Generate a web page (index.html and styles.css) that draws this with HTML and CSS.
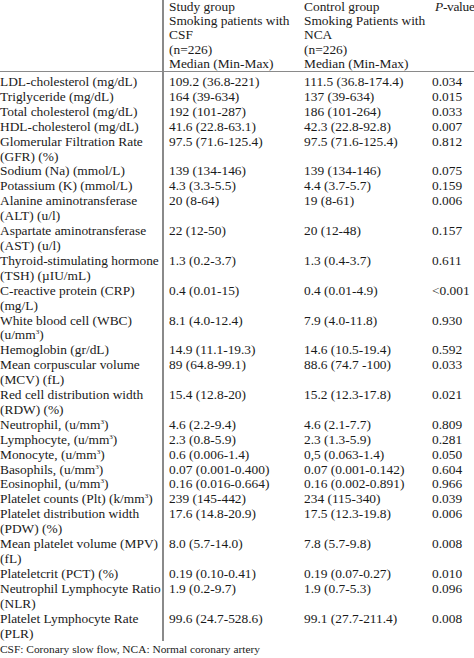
FILE: index.html
```html
<!DOCTYPE html>
<html>
<head>
<meta charset="utf-8">
<link rel="stylesheet" href="styles.css">
</head>
<body>
<table class="tbl">
<colgroup><col class="c1"><col class="c2"><col class="c3"><col class="c4"></colgroup>
<thead>
<tr class="head">
<th></th>
<th>Study group<br>Smoking patients with<br>CSF<br>(n=226)<br>Median (Min-Max)</th>
<th>Control group<br>Smoking Patients with<br>NCA<br>(n=226)<br>Median (Min-Max)</th>
<th><i>P</i>-value</th>
</tr>
</thead>
<tbody>
<tr class="first"><td>LDL-cholesterol (mg/dL)</td><td>109.2 (36.8-221)</td><td>111.5 (36.8-174.4)</td><td>0.034</td></tr>
<tr><td>Triglyceride (mg/dL)</td><td>164 (39-634)</td><td>137 (39-634)</td><td>0.015</td></tr>
<tr><td>Total cholesterol (mg/dL)</td><td>192 (101-287)</td><td>186 (101-264)</td><td>0.033</td></tr>
<tr><td>HDL-cholesterol (mg/dL)</td><td>41.6 (22.8-63.1)</td><td>42.3 (22.8-92.8)</td><td>0.007</td></tr>
<tr><td>Glomerular Filtration Rate<br>(GFR) (%)</td><td>97.5 (71.6-125.4)</td><td>97.5 (71.6-125.4)</td><td>0.812</td></tr>
<tr><td>Sodium (Na) (mmol/L)</td><td>139 (134-146)</td><td>139 (134-146)</td><td>0.075</td></tr>
<tr><td>Potassium (K) (mmol/L)</td><td>4.3 (3.3-5.5)</td><td>4.4 (3.7-5.7)</td><td>0.159</td></tr>
<tr><td>Alanine aminotransferase<br>(ALT) (u/l)</td><td>20 (8-64)</td><td>19 (8-61)</td><td>0.006</td></tr>
<tr><td>Aspartate aminotransferase<br>(AST) (u/l)</td><td>22 (12-50)</td><td>20 (12-48)</td><td>0.157</td></tr>
<tr><td>Thyroid-stimulating hormone<br>(TSH) (µIU/mL)</td><td>1.3 (0.2-3.7)</td><td>1.3 (0.4-3.7)</td><td>0.611</td></tr>
<tr><td>C-reactive protein (CRP)<br>(mg/L)</td><td>0.4 (0.01-15)</td><td>0.4 (0.01-4.9)</td><td>&lt;0.001</td></tr>
<tr><td>White blood cell (WBC)<br>(u/mm<sup>3</sup>)</td><td>8.1 (4.0-12.4)</td><td>7.9 (4.0-11.8)</td><td>0.930</td></tr>
<tr><td>Hemoglobin (gr/dL)</td><td>14.9 (11.1-19.3)</td><td>14.6 (10.5-19.4)</td><td>0.592</td></tr>
<tr><td>Mean corpuscular volume<br>(MCV) (fL)</td><td>89 (64.8-99.1)</td><td>88.6 (74.7 -100)</td><td>0.033</td></tr>
<tr><td>Red cell distribution width<br>(RDW) (%)</td><td>15.4 (12.8-20)</td><td>15.2 (12.3-17.8)</td><td>0.021</td></tr>
<tr><td>Neutrophil, (u/mm<sup>3</sup>)</td><td>4.6 (2.2-9.4)</td><td>4.6 (2.1-7.7)</td><td>0.809</td></tr>
<tr><td>Lymphocyte, (u/mm<sup>3</sup>)</td><td>2.3 (0.8-5.9)</td><td>2.3 (1.3-5.9)</td><td>0.281</td></tr>
<tr><td>Monocyte, (u/mm<sup>3</sup>)</td><td>0.6 (0.006-1.4)</td><td>0,5 (0.063-1.4)</td><td>0.050</td></tr>
<tr><td>Basophils, (u/mm<sup>3</sup>)</td><td>0.07 (0.001-0.400)</td><td>0.07 (0.001-0.142)</td><td>0.604</td></tr>
<tr><td>Eosinophil, (u/mm<sup>3</sup>)</td><td>0.16 (0.016-0.664)</td><td>0.16 (0.002-0.891)</td><td>0.966</td></tr>
<tr><td>Platelet counts (Plt) (k/mm<sup>3</sup>)</td><td>239 (145-442)</td><td>234 (115-340)</td><td>0.039</td></tr>
<tr><td>Platelet distribution width<br>(PDW) (%)</td><td>17.6 (14.8-20.9)</td><td>17.5 (12.3-19.8)</td><td>0.006</td></tr>
<tr><td>Mean platelet volume (MPV)<br>(fL)</td><td>8.0 (5.7-14.0)</td><td>7.8 (5.7-9.8)</td><td>0.008</td></tr>
<tr><td>Plateletcrit (PCT) (%)</td><td>0.19 (0.10-0.41)</td><td>0.19 (0.07-0.27)</td><td>0.010</td></tr>
<tr><td>Neutrophil Lymphocyte Ratio<br>(NLR)</td><td>1.9 (0.2-9.7)</td><td>1.9 (0.7-5.3)</td><td>0.096</td></tr>
<tr><td>Platelet Lymphocyte Rate<br>(PLR)</td><td>99.6 (24.7-528.6)</td><td>99.1 (27.7-211.4)</td><td>0.008</td></tr>
</tbody>
</table>
<p class="note">CSF: Coronary slow flow, NCA: Normal coronary artery</p>
</body>
</html>
```
FILE: styles.css
```css
html, body {
  margin: 0;
  padding: 0;
  background: #ffffff;
}
body {
  width: 474px;
  height: 658px;
  overflow: hidden;
  font-family: "Liberation Serif", "Times New Roman", serif;
  color: #1a1a1a;
}
.tbl {
  border-collapse: collapse;
  table-layout: fixed;
  width: 474px;
  font-size: 13.4px;
  line-height: 14.9px;
}
.c1 { width: 163px; }
.c2 { width: 136px; }
.c3 { width: 133px; }
.c4 { width: 42px; }
.tbl th, .tbl td {
  padding: 0;
  text-align: left;
  vertical-align: top;
  font-weight: normal;
  white-space: nowrap;
}
.tbl th:first-child, .tbl td:first-child {
  border-right: 2px solid #8a8a8a;
}
.tbl th:nth-child(2), .tbl td:nth-child(2) {
  padding-left: 5px;
}
.tbl th:nth-child(3), .tbl td:nth-child(3) {
  padding-left: 5px;
}
.tbl th:nth-child(4) {
  padding-left: 3px;
  letter-spacing: -0.3px;
}
.head th {
  line-height: 14.2px;
  padding-top: 0;
  padding-bottom: 0;
  border-bottom: 1px solid #8a8a8a;
}
.first td {
  padding-top: 3px;
}
sup {
  font-size: 7px;
  line-height: 0;
  vertical-align: 5px;
}
.note {
  margin: 2px 0 0 0;
  font-size: 11.4px;
  line-height: 13px;
}
```
